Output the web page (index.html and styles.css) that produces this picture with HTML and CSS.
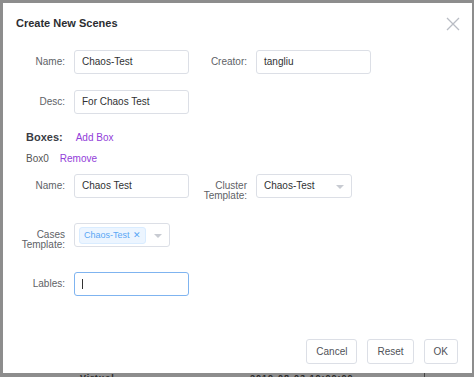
FILE: index.html
```html
<!DOCTYPE html>
<html>
<head>
<meta charset="utf-8">
<link rel="stylesheet" href="styles.css">
</head>
<body>
<div class="page">
  <div class="under-row">
    <span class="u1">Virtual</span>
    <span class="u2">2019-08-03 10:00:00</span>
  </div>
  <div class="under-line"></div>
</div>
<div class="modal">
  <div class="modal-header">
    <span class="modal-title">Create New Scenes</span>
    <svg class="close" width="14" height="14" viewBox="0 0 14 14"><path d="M1 1 L13 13 M13 1 L1 13" stroke="#b9bcc4" stroke-width="1.3" fill="none"/></svg>
  </div>
  <div class="modal-body">
    <div class="form-row">
      <div class="item">
        <label class="label l1">Name:</label>
        <div class="input">Chaos-Test</div>
      </div>
      <div class="item">
        <label class="label l2">Creator:</label>
        <div class="input">tangliu</div>
      </div>
    </div>
    <div class="form-row">
      <div class="item">
        <label class="label l1">Desc:</label>
        <div class="input">For Chaos Test</div>
      </div>
    </div>
    <div class="boxes-head">
      <span class="boxes-title">Boxes:</span>
      <a class="link add">Add Box</a>
    </div>
    <div class="box-head">
      <span class="box-name">Box0</span>
      <a class="link remove">Remove</a>
    </div>
    <div class="form-row tall">
      <div class="item">
        <label class="label l1">Name:</label>
        <div class="input">Chaos Test</div>
      </div>
      <div class="item">
        <label class="label l2">Cluster<br>Template:</label>
        <div class="input select wide">Chaos-Test<span class="arrow"></span></div>
      </div>
    </div>
    <div class="form-row tall">
      <div class="item">
        <label class="label l1">Cases<br>Template:</label>
        <div class="input select narrow">
          <span class="tag">Chaos-Test <span class="tag-x">✕</span></span>
          <span class="arrow"></span>
        </div>
      </div>
    </div>
    <div class="form-row">
      <div class="item">
        <label class="label l1">Lables:</label>
        <div class="input focused"><span class="caret"></span></div>
      </div>
    </div>
  </div>
  <div class="modal-footer">
    <button class="btn">Cancel</button>
    <button class="btn">Reset</button>
    <button class="btn">OK</button>
  </div>
</div>
</body>
</html>
```
FILE: styles.css
```css
html, body {
  margin: 0;
  padding: 0;
}
body {
  width: 474px;
  height: 377px;
  overflow: hidden;
  background: #8d8d8d;
  font-family: "Liberation Sans", Arial, sans-serif;
  position: relative;
}
.page {
  height: 377px;
}
.under-row {
  position: absolute;
  top: 374px;
  left: 0;
  width: 474px;
  font-size: 9px;
  line-height: 9px;
  font-weight: bold;
  color: #2a2a2a;
  letter-spacing: 1px;
}
.u1 {
  position: absolute;
  left: 80px;
}
.u2 {
  position: absolute;
  left: 250px;
}
.under-line {
  position: absolute;
  left: 424px;
  top: 372px;
  width: 1px;
  height: 5px;
  background: #444;
}
.modal {
  position: absolute;
  left: 3px;
  top: 3px;
  width: 469px;
  height: 370px;
  background: #fff;
  box-sizing: border-box;
  display: flex;
  flex-direction: column;
}
.modal-header {
  height: 40px;
  padding: 0 13px;
  display: flex;
  align-items: center;
  justify-content: space-between;
  box-sizing: border-box;
}
.modal-title {
  font-size: 11px;
  font-weight: bold;
  color: #2b2d31;
}
.close {
  margin-right: -1px;
  margin-top: 1px;
}
.modal-body {
  padding: 7px 0 0 13px;
  flex: 1;
}
.form-row {
  display: flex;
  margin-bottom: 16px;
}
.form-row.tall {
  margin-bottom: 22px;
}
.item {
  display: flex;
  align-items: flex-start;
}
.label {
  box-sizing: border-box;
  text-align: right;
  font-size: 10px;
  line-height: 10px;
  color: #606266;
  padding-top: 7px;
  padding-right: 9px;
}
.l1 {
  width: 58px;
}
.l2 {
  width: 67px;
}
.input {
  box-sizing: border-box;
  width: 115px;
  height: 24px;
  border: 1px solid #dcdfe6;
  border-radius: 3px;
  padding: 0 7px;
  font-size: 10px;
  line-height: 22px;
  color: #303133;
  display: flex;
  align-items: center;
  position: relative;
}
.input.focused {
  border-color: #7fb4f0;
}
.caret {
  width: 1px;
  height: 10px;
  background: #333;
}
.select.wide {
  width: 96px;
}
.select.narrow {
  width: 96px;
  padding-left: 4px;
}
.arrow {
  position: absolute;
  right: 7px;
  top: 10px;
  width: 0;
  height: 0;
  border-left: 4px solid transparent;
  border-right: 4px solid transparent;
  border-top: 4px solid #c8cbd2;
}
.tag {
  box-sizing: border-box;
  height: 17px;
  line-height: 15px;
  padding: 0 4px;
  background: #ecf5ff;
  border: 1px solid #d9ecff;
  border-radius: 3px;
  color: #5aa7f5;
  font-size: 9px;
  white-space: nowrap;
}
.tag-x {
  font-size: 9px;
  margin-left: 1px;
}
.boxes-head {
  display: flex;
  align-items: center;
  margin-left: 10px;
  height: 14px;
  margin-top: 11px;
}
.boxes-title {
  font-size: 11px;
  font-weight: bold;
  color: #3a3c44;
}
.link {
  font-size: 10px;
  color: #9240d9;
}
.add {
  margin-left: 13px;
}
.box-head {
  display: flex;
  align-items: center;
  margin-left: 10px;
  height: 12px;
  margin-top: 8px;
  margin-bottom: 10px;
}
.box-name {
  font-size: 10px;
  color: #555;
}
.remove {
  margin-left: 11px;
}
.modal-footer {
  display: flex;
  justify-content: flex-end;
  gap: 10px;
  padding: 0 14px 9px 0;
}
.btn {
  box-sizing: border-box;
  height: 25px;
  padding: 0 9px;
  background: #fff;
  border: 1px solid #dcdfe6;
  border-radius: 3px;
  font-family: "Liberation Sans", Arial, sans-serif;
  font-size: 10px;
  color: #505258;
}
```
